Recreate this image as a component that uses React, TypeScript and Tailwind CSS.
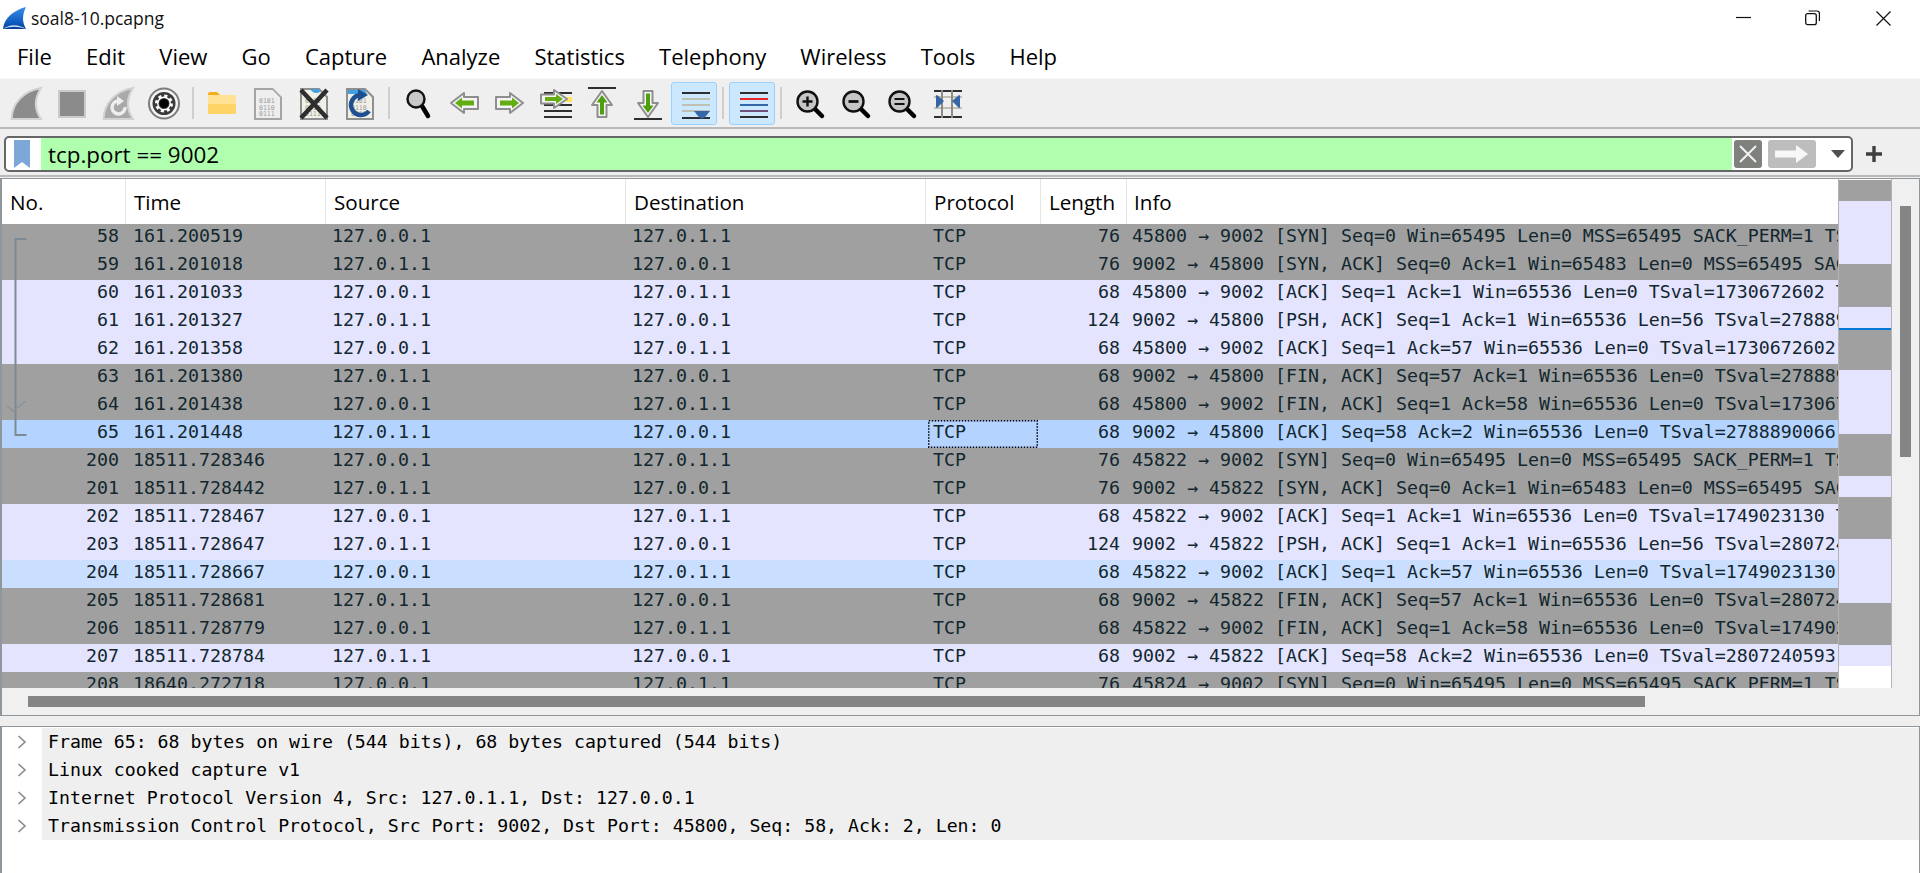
import React from "react";

type Packet = {
  no: number;
  time: string;
  src: string;
  dst: string;
  len: number;
  info: string;
  tone: "dark" | "light" | "selected" | "related";
};

const A = "127.0.0.1";
const B = "127.0.1.1";

const PACKETS: Packet[] = [
  { no: 58, time: "161.200519", src: A, dst: B, len: 76, tone: "dark", info: "45800 → 9002 [SYN] Seq=0 Win=65495 Len=0 MSS=65495 SACK_PERM=1 TSval=1730672602" },
  { no: 59, time: "161.201018", src: B, dst: A, len: 76, tone: "dark", info: "9002 → 45800 [SYN, ACK] Seq=0 Ack=1 Win=65483 Len=0 MSS=65495 SACK_PERM=1" },
  { no: 60, time: "161.201033", src: A, dst: B, len: 68, tone: "light", info: "45800 → 9002 [ACK] Seq=1 Ack=1 Win=65536 Len=0 TSval=1730672602 TSecr=2788890066" },
  { no: 61, time: "161.201327", src: B, dst: A, len: 124, tone: "light", info: "9002 → 45800 [PSH, ACK] Seq=1 Ack=1 Win=65536 Len=56 TSval=2788890066 TSecr=1730672602" },
  { no: 62, time: "161.201358", src: A, dst: B, len: 68, tone: "light", info: "45800 → 9002 [ACK] Seq=1 Ack=57 Win=65536 Len=0 TSval=1730672602 TSecr=2788890066" },
  { no: 63, time: "161.201380", src: B, dst: A, len: 68, tone: "dark", info: "9002 → 45800 [FIN, ACK] Seq=57 Ack=1 Win=65536 Len=0 TSval=2788890066 TSecr=1730672602" },
  { no: 64, time: "161.201438", src: A, dst: B, len: 68, tone: "dark", info: "45800 → 9002 [FIN, ACK] Seq=1 Ack=58 Win=65536 Len=0 TSval=1730672602 TSecr=2788890066" },
  { no: 65, time: "161.201448", src: B, dst: A, len: 68, tone: "selected", info: "9002 → 45800 [ACK] Seq=58 Ack=2 Win=65536 Len=0 TSval=2788890066 TSecr=1730672602" },
  { no: 200, time: "18511.728346", src: A, dst: B, len: 76, tone: "dark", info: "45822 → 9002 [SYN] Seq=0 Win=65495 Len=0 MSS=65495 SACK_PERM=1 TSval=1749023130" },
  { no: 201, time: "18511.728442", src: B, dst: A, len: 76, tone: "dark", info: "9002 → 45822 [SYN, ACK] Seq=0 Ack=1 Win=65483 Len=0 MSS=65495 SACK_PERM=1" },
  { no: 202, time: "18511.728467", src: A, dst: B, len: 68, tone: "light", info: "45822 → 9002 [ACK] Seq=1 Ack=1 Win=65536 Len=0 TSval=1749023130 TSecr=2807240593" },
  { no: 203, time: "18511.728647", src: B, dst: A, len: 124, tone: "light", info: "9002 → 45822 [PSH, ACK] Seq=1 Ack=1 Win=65536 Len=56 TSval=2807240593 TSecr=1749023130" },
  { no: 204, time: "18511.728667", src: A, dst: B, len: 68, tone: "related", info: "45822 → 9002 [ACK] Seq=1 Ack=57 Win=65536 Len=0 TSval=1749023130 TSecr=2807240593" },
  { no: 205, time: "18511.728681", src: B, dst: A, len: 68, tone: "dark", info: "9002 → 45822 [FIN, ACK] Seq=57 Ack=1 Win=65536 Len=0 TSval=2807240593 TSecr=1749023130" },
  { no: 206, time: "18511.728779", src: A, dst: B, len: 68, tone: "dark", info: "45822 → 9002 [FIN, ACK] Seq=1 Ack=58 Win=65536 Len=0 TSval=1749023130 TSecr=2807240593" },
  { no: 207, time: "18511.728784", src: B, dst: A, len: 68, tone: "light", info: "9002 → 45822 [ACK] Seq=58 Ack=2 Win=65536 Len=0 TSval=2807240593 TSecr=1749023130" },
  { no: 208, time: "18640.272718", src: A, dst: B, len: 76, tone: "dark", info: "45824 → 9002 [SYN] Seq=0 Win=65495 Len=0 MSS=65495 SACK_PERM=1 TSval=1749151674" },
];

const TONES = {
  dark: "bg-[#a0a0a0]",
  light: "bg-[#e4e4ff]",
  selected: "bg-[#b5d3ff]",
  related: "bg-[#cadfff]",
};

const MENUS = ["File", "Edit", "View", "Go", "Capture", "Analyze", "Statistics", "Telephony", "Wireless", "Tools", "Help"];

const DETAILS = [
  "Frame 65: 68 bytes on wire (544 bits), 68 bytes captured (544 bits)",
  "Linux cooked capture v1",
  "Internet Protocol Version 4, Src: 127.0.1.1, Dst: 127.0.0.1",
  "Transmission Control Protocol, Src Port: 9002, Dst Port: 45800, Seq: 58, Ack: 2, Len: 0",
];

// minimap bands, heights in px from the top of the strip
const MINIMAP: { h: number; c: string }[] = [
  { h: 21, c: "bg-[#a0a0a0]" },
  { h: 63, c: "bg-[#e4e4ff]" },
  { h: 43, c: "bg-[#a0a0a0]" },
  { h: 21, c: "bg-[#e4e4ff]" },
  { h: 2, c: "bg-[#0078d7]" },
  { h: 40, c: "bg-[#a0a0a0]" },
  { h: 64, c: "bg-[#e4e4ff]" },
  { h: 42, c: "bg-[#a0a0a0]" },
  { h: 21, c: "bg-[#e4e4ff]" },
  { h: 42, c: "bg-[#a0a0a0]" },
  { h: 64, c: "bg-[#e4e4ff]" },
  { h: 42, c: "bg-[#a0a0a0]" },
  { h: 21, c: "bg-[#e4e4ff]" },
];

function Icon({ children }: { children: React.ReactNode }) {
  return (
    <svg width="36" height="36" viewBox="0 0 36 36" fill="none">
      {children}
    </svg>
  );
}

function Fin({ fill }: { fill: string }) {
  return <path d="M3.5 34 C4 18 16 6 33 3 C26 14 26 24 33 34 Z" fill={fill} stroke="#d2d2d2" strokeWidth="2" />;
}

function DocShape({ fill = "#f1f0e6", stroke = "#8f8f8f" }: { fill?: string; stroke?: string }) {
  return <path d="M5 4 H23 L31 12 V34 H5 Z" fill={fill} stroke={stroke} strokeWidth="2" />;
}

function Bits({ color = "#9a9a9a" }: { color?: string }) {
  return (
    <g fontFamily="'DejaVu Sans Mono', monospace" fontSize="6.5" fill={color}>
      <text x="9" y="18">0101</text>
      <text x="9" y="24.5">0110</text>
      <text x="9" y="31">0111</text>
    </g>
  );
}

function Lens({ sign }: { sign: "plus" | "minus" | "equal" }) {
  return (
    <>
      <path d="M23 24 L30 31" stroke="#000" strokeWidth="4.5" strokeLinecap="round" />
      <circle cx="15.5" cy="16.5" r="10" fill="#c6c6c6" stroke="#111" strokeWidth="2.4" />
      {sign === "plus" && <path d="M10.5 16.5 H20.5 M15.5 11.5 V21.5" stroke="#111" strokeWidth="2.4" />}
      {sign === "minus" && <path d="M10.5 16.5 H20.5" stroke="#111" strokeWidth="2.8" />}
      {sign === "equal" && <path d="M10.5 14 H20.5 M10.5 19 H20.5" stroke="#111" strokeWidth="2.2" />}
    </>
  );
}

function HArrow({ left }: { left?: boolean }) {
  return (
    <g transform={left ? "matrix(-1 0 0 1 36 0)" : undefined}>
      <path d="M4 12 H18 V8 L31 18 L18 28 V24 H4 Z" fill="#f4f4f4" stroke="#8e8e8e" strokeWidth="2" strokeLinejoin="round" />
      <path d="M8 15.5 H20 V12.5 L27 18 L20 23.5 V20.5 H8 Z" fill="#63ad12" />
    </g>
  );
}

function VArrow({ down }: { down?: boolean }) {
  return (
    <g transform={down ? "matrix(1 0 0 -1 0 38)" : undefined}>
      <path d="M13.5 32 V20 H8 L18 6 L28 20 H22.5 V32 Z" fill="#f4f4f4" stroke="#8e8e8e" strokeWidth="2" strokeLinejoin="round" />
      <path d="M16 29.5 V17.5 H12.5 L18 10 L23.5 17.5 H20 V29.5 Z" fill="#4f9e0f" />
    </g>
  );
}

const TOOLS: React.ReactNode[] = [
  <Icon><Fin fill="#8c8c8c" /></Icon>,
  <Icon>
    <rect x="5" y="6" width="26" height="26" fill="#8b8b8b" stroke="#cbcbcb" strokeWidth="2" />
  </Icon>,
  <Icon>
    <Fin fill="#a9a9a9" />
    <path d="M25 22 A6.5 6.5 0 1 1 18 16" stroke="#eee" strokeWidth="3.4" />
    <path d="M17 11 L24 16 L17 21 Z" fill="#eee" />
  </Icon>,
  <Icon>
    <circle cx="18" cy="18.5" r="15" fill="#f4f4f4" stroke="#7c7c7c" strokeWidth="2" />
    <circle cx="18" cy="18.5" r="11.5" fill="#3b3b3b" />
    <circle cx="18" cy="18.5" r="7.5" stroke="#fff" strokeWidth="3" strokeDasharray="3 2.9" />
    <circle cx="18" cy="18.5" r="6.2" stroke="#fff" strokeWidth="1.4" />
    <circle cx="18" cy="18.5" r="4.6" fill="#000" />
  </Icon>,
  null,
  <Icon>
    <path d="M4 9 Q4 7 6 7 H13 L16 10 H4 Z" fill="#f7ac1d" />
    <rect x="4" y="10" width="28" height="19" rx="1" fill="#ffd466" />
    <rect x="4" y="10" width="28" height="9" fill="#ffe294" />
  </Icon>,
  <Icon>
    <DocShape fill="#eeeeee" stroke="#a5a5a5" />
    <path d="M23 3 L32 12 V3 Z" fill="#efefef" />
    <Bits />
  </Icon>,
  <Icon>
    <DocShape />
    <path d="M14 4 Q18 10 24 7 L23 4 Z" fill="#41a0e0" />
    <Bits />
    <path d="M5 5 L31 33 M31 5 L5 33" stroke="#2e2e2e" strokeWidth="4.5" />
  </Icon>,
  <Icon>
    <DocShape />
    <path d="M6 5 H23 L25 9 H6 Z" fill="#41a0e0" />
    <Bits />
    <path d="M27 26 A10 10 0 1 1 18 10" stroke="#1d4f91" strokeWidth="4.5" />
    <path d="M16 4 L26 10 L16 16 Z" fill="#1d4f91" />
  </Icon>,
  null,
  <Icon>
    <path d="M22 21 L28 31" stroke="#000" strokeWidth="4.5" strokeLinecap="round" />
    <circle cx="16" cy="14" r="8.5" fill="#c8c8c8" stroke="#111" strokeWidth="2.4" />
  </Icon>,
  <Icon><HArrow left /></Icon>,
  <Icon><HArrow /></Icon>,
  <Icon>
    <rect x="28" y="12" width="6" height="5" fill="#ffe45c" />
    <path d="M6 8 H34 M6 20 H34 M6 26 H34 M6 32 H34" stroke="#2e2e2e" strokeWidth="2" />
    <path d="M3 9.5 H16 V5 L29 14 L16 23 V18.5 H3 Z" fill="#f4f4f4" stroke="#8e8e8e" strokeWidth="2" strokeLinejoin="round" />
    <path d="M7 12 H18 V9 L25 14 L18 19 V16 H7 Z" fill="#63ad12" />
  </Icon>,
  <Icon>
    <path d="M4 3 H32" stroke="#2e2e2e" strokeWidth="2" />
    <VArrow />
  </Icon>,
  <Icon>
    <path d="M4 34 H32" stroke="#2e2e2e" strokeWidth="2" />
    <VArrow down />
  </Icon>,
  <Icon>
    <path d="M6 8 H34 M6 33 H34" stroke="#2e2e2e" strokeWidth="2" />
    <path d="M6 14 H34 M6 20 H34 M6 26 H34" stroke="#bfc0b4" strokeWidth="2" />
    <path d="M18 26 H34 L30 31 Q26 36 22 31 Z" fill="#3567a8" />
  </Icon>,
  null,
  <Icon>
    <path d="M6 8 H34 M6 32 H34" stroke="#2e2e2e" strokeWidth="2" />
    <path d="M6 14 H34" stroke="#e8262b" strokeWidth="2" />
    <path d="M6 20 H34" stroke="#3567a8" strokeWidth="2" />
    <path d="M6 26 H34" stroke="#72507d" strokeWidth="2" />
  </Icon>,
  null,
  <Icon><Lens sign="plus" /></Icon>,
  <Icon><Lens sign="minus" /></Icon>,
  <Icon><Lens sign="equal" /></Icon>,
  <Icon>
    <path d="M4 6 H32 M4 32 H32" stroke="#2e2e2e" strokeWidth="2" />
    <path d="M4 12 H32 M4 23 H32" stroke="#bfc0b4" strokeWidth="2" />
    <path d="M12 5 V33 M22 5 V33" stroke="#8b8b85" strokeWidth="2" />
    <path d="M6 11 Q6 10 7 10 L14 16 L7 23 Q6 23 6 22 Z M30 11 Q30 10 29 10 L22 16 L29 23 Q30 23 30 22 Z" fill="#3567a8" />
  </Icon>,
];

const ACTIVE = [16, 18];

function Toolbar() {
  return (
    <div className="flex items-center h-[49px] pl-[3px] bg-[#efefef] border-t border-[#f8f8f8]">
      {TOOLS.map((tool, i) =>
        tool === null ? (
          <div key={i} className="w-[12px] shrink-0 flex justify-center">
            <div className="w-[2px] h-[32px] bg-[#cfcfcf]" />
          </div>
        ) : (
          <div
            key={i}
            className={`w-[46px] h-[43px] shrink-0 flex items-center justify-center rounded-[3px] border ${
              ACTIVE.includes(i) ? "bg-[#cce8ff] border-[#99d1ff]" : "border-transparent"
            }`}
          >
            {tool}
          </div>
        )
      )}
    </div>
  );
}

function FilterBar() {
  return (
    <div className="flex items-center h-[48px] bg-[#efefef] border-t-[2px] border-[#b9b9b9] pl-[4px] pt-[4px]">
      <div className="flex items-stretch w-[1849px] h-[36px] bg-white border-[2px] border-[#666666] rounded-[5px] overflow-hidden">
        <div className="w-[35px] flex items-center justify-start pl-[8px]">
          <svg width="16" height="28" viewBox="0 0 16 28">
            <path d="M0 0 H16 V28 L8 22 L0 28 Z" fill="#7da7d9" />
          </svg>
        </div>
        <div className="w-[1691px] bg-[#afffaf] pl-[7px] text-[22.4px] leading-[34px] text-black [font-family:'Open_Sans',sans-serif]">
          tcp.port == 9002
        </div>
        <div className="flex items-center pl-[2px] gap-[6px]">
          <div className="w-[28px] h-[28px] rounded-[3px] bg-[#7f817d] flex items-center justify-center">
            <svg width="20" height="20" viewBox="0 0 20 20">
              <path d="M2 2 L18 18 M18 2 L2 18" stroke="#f2f2f2" strokeWidth="2" />
            </svg>
          </div>
          <div className="w-[48px] h-[28px] rounded-[3px] bg-[#bdbdbd] flex items-center justify-center">
            <svg width="34" height="18" viewBox="0 0 34 18">
              <path d="M0 5.5 H21 V0 L33 9 L21 18 V12.5 H0 Z" fill="#f7f7f7" />
            </svg>
          </div>
          <svg className="ml-[9px]" width="14" height="8" viewBox="0 0 14 8">
            <path d="M0 0 H14 L7 8 Z" fill="#505050" />
          </svg>
        </div>
      </div>
      <svg className="ml-[13px]" width="16" height="16" viewBox="0 0 16 16">
        <path d="M8 0 V16 M0 8 H16" stroke="#3f3f3f" strokeWidth="3.4" />
      </svg>
    </div>
  );
}

const COLS = [
  { label: "No.", w: "w-[124px]" },
  { label: "Time", w: "w-[200px]" },
  { label: "Source", w: "w-[300px]" },
  { label: "Destination", w: "w-[300px]" },
  { label: "Protocol", w: "w-[115px]" },
  { label: "Length", w: "w-[86px]" },
];

function PacketRow({ p }: { p: Packet }) {
  return (
    <div className={`flex h-[28px] leading-[24px] whitespace-nowrap ${TONES[p.tone]}`}>
      <div className="w-[124px] shrink-0 pr-[7px] text-right">{p.no}</div>
      <div className="w-[200px] shrink-0 pl-[7px]">{p.time}</div>
      <div className="w-[300px] shrink-0 pl-[6px]">{p.src}</div>
      <div className="w-[300px] shrink-0 pl-[6px]">{p.dst}</div>
      <div className="relative w-[115px] shrink-0 pl-[7px]">
        TCP
        {p.tone === "selected" && (
          <svg className="absolute left-[2px] top-0" width="110" height="28" viewBox="0 0 110 28" fill="none">
            <rect x="0.75" y="0.75" width="108.5" height="26.5" stroke="#000" strokeWidth="1.5" strokeDasharray="1.5 1.5" />
          </svg>
        )}
      </div>
      <div className="w-[86px] shrink-0 pr-[7px] text-right">{p.len}</div>
      <div className="shrink-0 pl-[5px]">{p.info}</div>
    </div>
  );
}

function PacketList() {
  return (
    <div className="flex flex-col h-[538px] border-t border-b border-l-[2px] border-r-[1px] border-[#8f969c] bg-[#f0f0f0]">
      <div className="flex h-[509px]">
        <div className="relative w-[1836px] h-[509px] overflow-hidden bg-white">
          <div className="flex h-[45px] text-[20.6px] text-black [font-family:'Open_Sans',sans-serif]">
            {COLS.map((c) => (
              <div key={c.label} className={`${c.w} shrink-0 h-full pl-[8px] leading-[47px] border-r border-[#e5e5e5]`}>
                {c.label}
              </div>
            ))}
            <div className="pl-[7px] leading-[47px]">Info</div>
          </div>
          <div className="text-[18.27px] text-[#12272e] [font-family:'DejaVu_Sans_Mono',monospace]">
            {PACKETS.map((p) => (
              <PacketRow key={p.no} p={p} />
            ))}
          </div>
          {/* related packets bracket on top of the No. column */}
          <svg className="absolute left-0 top-[45px]" width="30" height="220" viewBox="0 0 30 220" fill="none">
            <path d="M24.5 15 H13.5 V211 H24.5" stroke="#7c8a94" strokeWidth="2" />
            <path d="M5 182 L11 187 L24 177" stroke="#8a9298" strokeWidth="1.4" />
          </svg>
        </div>
        {/* minimap + vertical scrollbar */}
        <div className="w-[54px] shrink-0 border-x border-[#b4b4b4] bg-white flex flex-col pt-[1px] pb-[1px]">
          {MINIMAP.map((band, i) => (
            <div key={i} className={`shrink-0 ${band.c}`} style={{ height: band.h }} />
          ))}
        </div>
        <div className="w-[27px] shrink-0 pl-[8px] pt-[27px]">
          <div className="w-[11px] h-[251px] bg-[#858585]" />
        </div>
      </div>
      <div className="h-[27px] pl-[26px] pt-[8px]">
        <div className="w-[1617px] h-[11px] bg-[#858585]" />
      </div>
    </div>
  );
}

function DetailsPane() {
  return (
    <div className="flex-1 border-t border-l-[2px] border-r-[1px] border-[#8f969c] bg-white pt-[1px]">
      {DETAILS.map((d) => (
        <div key={d} className="flex h-[28px] items-center">
          <div className="w-[40px] flex justify-center pr-[1px]">
            <svg width="10" height="14" viewBox="0 0 10 14" fill="none">
              <path d="M1.5 1 L8 7 L1.5 13" stroke="#8a8a8a" strokeWidth="1.6" />
            </svg>
          </div>
          <div className="flex-1 h-full bg-[#efefef] pl-[6px] leading-[28px] text-[18.22px] text-black whitespace-nowrap [font-family:'DejaVu_Sans_Mono',monospace]">
            {d}
          </div>
        </div>
      ))}
    </div>
  );
}

export default function App() {
  return (
    <div className="w-[1920px] h-[873px] overflow-hidden flex flex-col bg-white [font-family:'Open_Sans',sans-serif]">
      {/* title bar */}
      <div className="flex items-center h-[36px] pl-[2px]">
        <svg width="25" height="23" viewBox="0 0 25 23">
          <defs>
            <linearGradient id="wsfin" x1="0" y1="0" x2="0" y2="1">
              <stop offset="0" stopColor="#3a8fe8" />
              <stop offset="0.7" stopColor="#0f5cc0" />
              <stop offset="1" stopColor="#0a3d96" />
            </linearGradient>
          </defs>
          <path d="M1 22 C2 11 12 3 24 0 C20 8 20 15 24 22 Z" fill="url(#wsfin)" />
          <path d="M1 22 C8 17 16 17 24 22 C16 19 8 19 1 22 Z" fill="#cfe3f8" />
        </svg>
        <span className="ml-[4px] text-[17.5px] text-[#111]">soal8-10.pcapng</span>
        <div className="ml-auto flex items-center">
          <svg className="mr-[54px]" width="15" height="15" viewBox="0 0 15 15" fill="none">
            <path d="M0 6.5 H15" stroke="#111" strokeWidth="1.2" />
          </svg>
          <svg className="mr-[56px]" width="15" height="16" viewBox="0 0 15 16" fill="none">
            <rect x="0.7" y="3.7" width="10.6" height="11" rx="2" stroke="#111" strokeWidth="1.3" />
            <path d="M3.5 1 H12 Q14.4 1 14.4 3.4 V11" stroke="#111" strokeWidth="1.2" />
          </svg>
          <svg className="mr-[29px]" width="15" height="15" viewBox="0 0 15 15" fill="none">
            <path d="M0.5 0.5 L14.5 14.5 M14.5 0.5 L0.5 14.5" stroke="#111" strokeWidth="1.2" />
          </svg>
        </div>
      </div>
      {/* menu bar */}
      <div className="flex items-center h-[42px] pb-[2px] pl-[17px] gap-[34.2px] text-[22px] text-black">
        {MENUS.map((m) => (
          <span key={m}>{m}</span>
        ))}
      </div>
      <Toolbar />
      <FilterBar />
      <div className="h-[2px] bg-[#b9b9b9]" />
      <div className="h-[1px] bg-[#efefef]" />
      <PacketList />
      <div className="h-[10px] bg-[#efefef]" />
      <DetailsPane />
    </div>
  );
}
